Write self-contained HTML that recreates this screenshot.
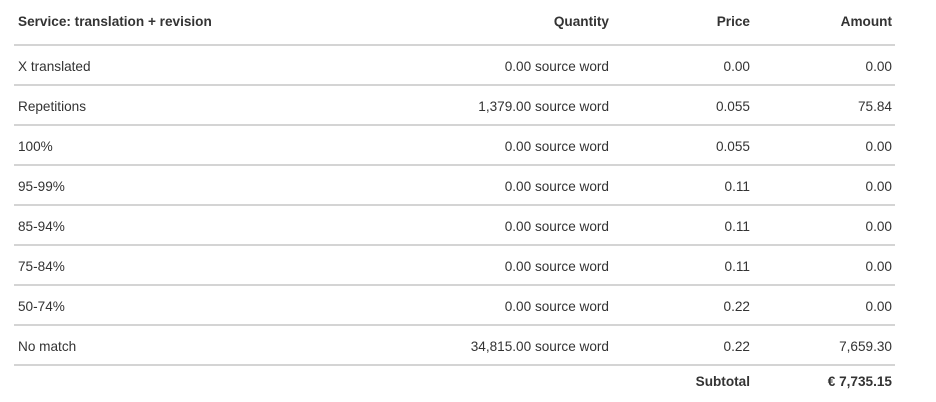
<!DOCTYPE html>
<html><head><meta charset="utf-8"><style>
body{margin:0;width:936px;height:400px;background:#fff;font-family:"Liberation Sans",Arial,sans-serif;font-size:13.6px;color:#333;position:relative;overflow:hidden}
.r{position:absolute;left:0;width:936px;height:40px}
.r span{position:absolute;top:0;line-height:40px;white-space:nowrap}
.a{left:18px}.q{right:327px}.p{right:186px}.m{right:44px}
.ln{position:absolute;left:14px;width:881px;height:2px;background:#d4d4d4}
b{font-weight:bold}
</style></head><body>
<div class="r" style="top:2px"><span class="a"><b>Service: translation + revision</b></span><span class="q"><b>Quantity</b></span><span class="p"><b>Price</b></span><span class="m"><b>Amount</b></span></div>
<div class="ln" style="top:44px"></div>
<div class="r" style="top:47px"><span class="a">X translated</span><span class="q">0.00 source word</span><span class="p">0.00</span><span class="m">0.00</span></div>
<div class="ln" style="top:84px"></div>
<div class="r" style="top:87px"><span class="a">Repetitions</span><span class="q">1,379.00 source word</span><span class="p">0.055</span><span class="m">75.84</span></div>
<div class="ln" style="top:124px"></div>
<div class="r" style="top:127px"><span class="a">100%</span><span class="q">0.00 source word</span><span class="p">0.055</span><span class="m">0.00</span></div>
<div class="ln" style="top:164px"></div>
<div class="r" style="top:167px"><span class="a">95-99%</span><span class="q">0.00 source word</span><span class="p">0.11</span><span class="m">0.00</span></div>
<div class="ln" style="top:204px"></div>
<div class="r" style="top:207px"><span class="a">85-94%</span><span class="q">0.00 source word</span><span class="p">0.11</span><span class="m">0.00</span></div>
<div class="ln" style="top:244px"></div>
<div class="r" style="top:247px"><span class="a">75-84%</span><span class="q">0.00 source word</span><span class="p">0.11</span><span class="m">0.00</span></div>
<div class="ln" style="top:284px"></div>
<div class="r" style="top:287px"><span class="a">50-74%</span><span class="q">0.00 source word</span><span class="p">0.22</span><span class="m">0.00</span></div>
<div class="ln" style="top:324px"></div>
<div class="r" style="top:327px"><span class="a">No match</span><span class="q">34,815.00 source word</span><span class="p">0.22</span><span class="m">7,659.30</span></div>
<div class="ln" style="top:364px"></div>
<div class="r" style="top:362px"><span class="p"><b>Subtotal</b></span><span class="m"><b>€ 7,735.15</b></span></div>
</body></html>
